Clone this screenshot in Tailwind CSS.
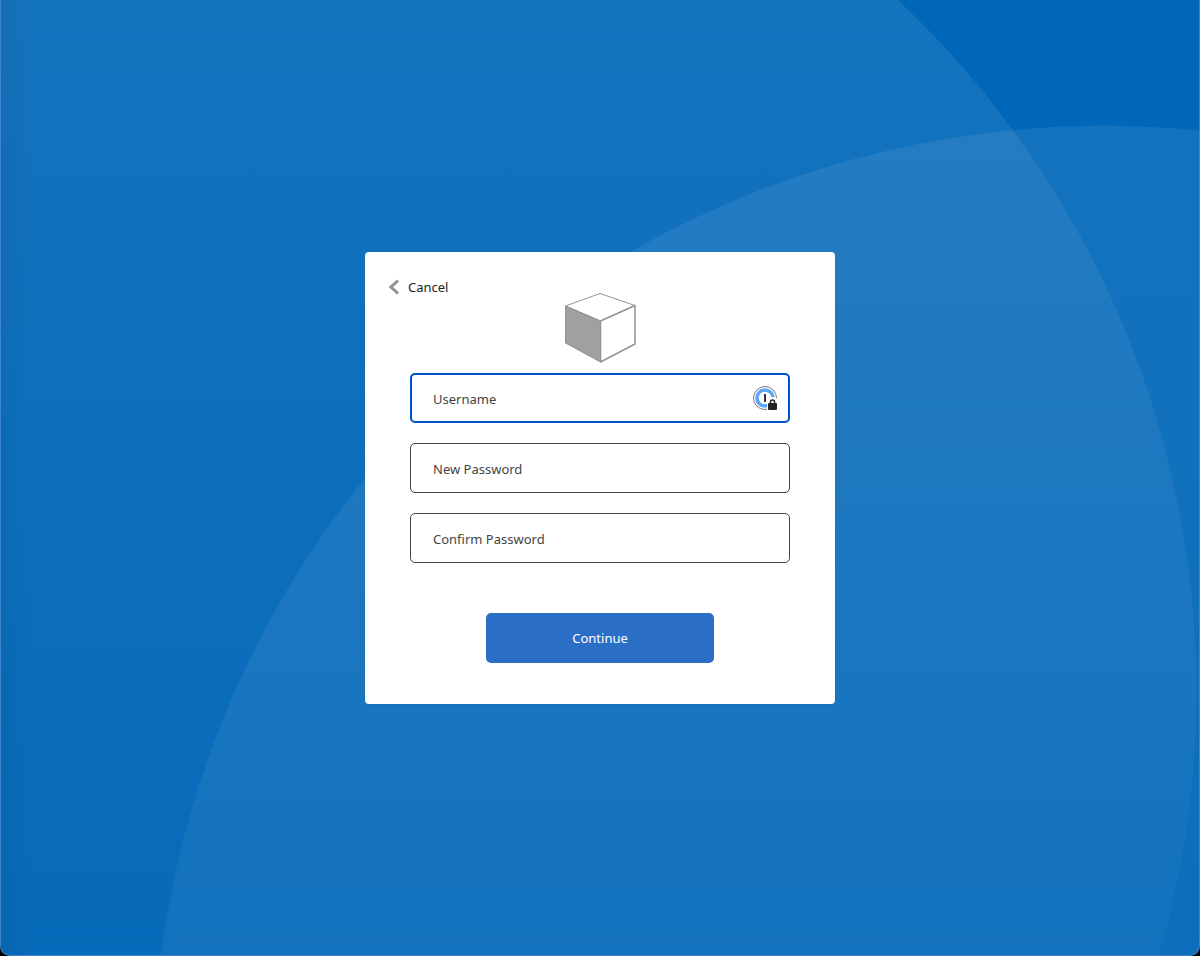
<!DOCTYPE html>
<html lang="en">
<head>
    <meta charset="UTF-8">
    <meta name="viewport" content="width=device-width, initial-scale=1.0">
    <title>Create account</title>
    <script src="https://cdn.jsdelivr.net/npm/@tailwindcss/browser@4"></script>
</head>
<body class="bg-black font-['Segoe_UI','Noto_Sans',sans-serif] text-[13px]">
    <div class="relative flex min-h-screen items-center justify-center overflow-hidden rounded-b-[10px] border-x border-b border-[#3c84cc] bg-[#0067b8]">
        <!-- background circles -->
        <svg class="absolute inset-0 h-full w-full" viewBox="0 0 1200 956" preserveAspectRatio="xMidYMid slice" aria-hidden="true">
            <defs>
                <linearGradient id="fadeLeft" gradientUnits="userSpaceOnUse" x1="0" y1="0" x2="0" y2="956">
                    <stop offset="0" stop-color="#fff" stop-opacity=".08" />
                    <stop offset="1" stop-color="#fff" stop-opacity=".025" />
                </linearGradient>
                <linearGradient id="fadeRight" gradientUnits="userSpaceOnUse" x1="0" y1="125" x2="0" y2="956">
                    <stop offset="0" stop-color="#fff" stop-opacity=".075" />
                    <stop offset="1" stop-color="#fff" stop-opacity=".05" />
                </linearGradient>
            </defs>
            <circle cx="246" cy="692" r="951" fill="url(#fadeLeft)" />
            <circle cx="1104" cy="1077" r="951" fill="url(#fadeRight)" />
        </svg>
        <div class="absolute inset-y-0 left-0 w-7 bg-linear-to-r from-black/5 to-transparent"></div>

        <main class="relative w-full max-w-[470px] rounded bg-white px-6 pt-[25px] pb-[41px] shadow-xs">
            <button type="button" class="flex h-5 items-center gap-2 text-[#222]">
                <svg class="h-4 w-[11px]" viewBox="0 0 11 16" fill="none" stroke="#929292" stroke-width="3" aria-hidden="true">
                    <path d="M9 1.500 2 8l7 6.500" />
                </svg>
                <span class="pt-0.5">Cancel</span>
            </button>

            <svg class="mx-auto -mt-1 h-[72px] w-[72px]" viewBox="0 0 72 72" fill="#fff" stroke="#929292" stroke-linejoin="round" aria-hidden="true">
                <path d="M36 .500 71 12.500 36.500 28 1.500 13z" />
                <path d="M71 12.500V51L36.500 69V28z" stroke-width="1.500" />
                <path d="M1.500 13 36.500 28V69L1.500 50z" fill="#a0a0a0" />
            </svg>

            <form class="mx-auto mt-2 flex max-w-[380px] flex-col gap-5">
                <div class="relative">
                    <input type="text" aria-label="Username" placeholder="Username" class="block h-[50px] w-full rounded-[5px] border-2 border-[#0050c5] px-[21px] pt-0.5 text-[#444] outline-none placeholder:text-[#444]">
                    <svg class="absolute top-3 right-3 h-[26px] w-[26px]" viewBox="0 0 26 26" fill="none" aria-hidden="true">
                        <circle cx="13" cy="13" r="11.500" stroke="#777" />
                        <circle cx="13" cy="13" r="8" stroke="#5aa6fa" stroke-width="3.500" />
                        <path d="M13 9v8" stroke="#333" stroke-width="2" />
                        <path d="M15 26v-9q0-5 5.500-5t5.500 5v9z" fill="#fff" />
                        <path d="M18.500 19v-2a2 2 0 0 1 4 0v2" stroke="#222" stroke-width="1.500" />
                        <rect x="16" y="18" width="9" height="7" rx="1" fill="#222" />
                    </svg>
                </div>
                <input type="password" aria-label="New Password" placeholder="New Password" class="h-[50px] w-full rounded-[5px] border border-[#444] px-[22px] pt-0.5 text-[#444] placeholder:text-[#444]">
                <input type="password" aria-label="Confirm Password" placeholder="Confirm Password" class="h-[50px] w-full rounded-[5px] border border-[#444] px-[22px] pt-0.5 text-[#444] placeholder:text-[#444]">
                <button type="submit" class="mx-auto mt-[30px] h-[50px] w-[228px] rounded-[5px] bg-[#2a6ec6] pt-0.5 text-white">Continue</button>
            </form>
        </main>
    </div>
</body>
</html>
